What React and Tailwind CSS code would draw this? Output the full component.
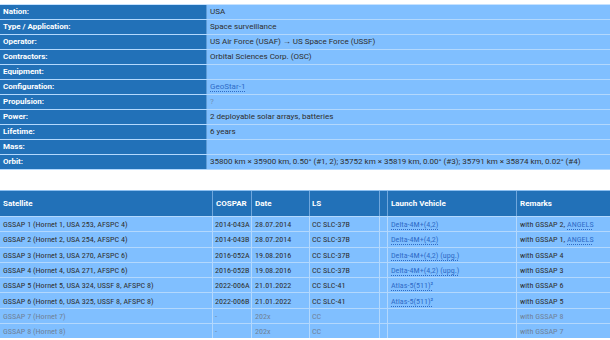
import React from 'react';

const facts = [
  { label: 'Nation:', value: 'USA' },
  { label: 'Type / Application:', value: 'Space surveillance' },
  { label: 'Operator:', value: 'US Air Force (USAF) → US Space Force (USSF)' },
  { label: 'Contractors:', value: 'Orbital Sciences Corp. (OSC)' },
  { label: 'Equipment:', value: '' },
  { label: 'Configuration:', value: 'GeoStar-1', link: true },
  { label: 'Propulsion:', value: '?', muted: true },
  { label: 'Power:', value: '2 deployable solar arrays, batteries' },
  { label: 'Lifetime:', value: '6 years' },
  { label: 'Mass:', value: '' },
  {
    label: 'Orbit:',
    value: '35800 km × 35900 km, 0.50° (#1, 2); 35752 km × 35819 km, 0.00° (#3); 35791 km × 35874 km, 0.02° (#4)',
  },
];

const sats = [
  { name: 'GSSAP 1 (Hornet 1, USA 253, AFSPC 4)', cospar: '2014-043A', date: '28.07.2014', ls: 'CC SLC-37B', lv: 'Delta-4M+(4,2)', with: 'with GSSAP 2,', angels: true },
  { name: 'GSSAP 2 (Hornet 2, USA 254, AFSPC 4)', cospar: '2014-043B', date: '28.07.2014', ls: 'CC SLC-37B', lv: 'Delta-4M+(4,2)', with: 'with GSSAP 1,', angels: true },
  { name: 'GSSAP 3 (Hornet 3, USA 270, AFSPC 6)', cospar: '2016-052A', date: '19.08.2016', ls: 'CC SLC-37B', lv: 'Delta-4M+(4,2) (upg.)', with: 'with GSSAP 4' },
  { name: 'GSSAP 4 (Hornet 4, USA 271, AFSPC 6)', cospar: '2016-052B', date: '19.08.2016', ls: 'CC SLC-37B', lv: 'Delta-4M+(4,2) (upg.)', with: 'with GSSAP 3' },
  { name: 'GSSAP 5 (Hornet 5, USA 324, USSF 8, AFSPC 8)', cospar: '2022-006A', date: '21.01.2022', ls: 'CC SLC-41', lv: 'Atlas-5(511)²', with: 'with GSSAP 6' },
  { name: 'GSSAP 6 (Hornet 6, USA 325, USSF 8, AFSPC 8)', cospar: '2022-006B', date: '21.01.2022', ls: 'CC SLC-41', lv: 'Atlas-5(511)²', with: 'with GSSAP 5' },
  { name: 'GSSAP 7 (Hornet 7)', cospar: '-', date: '202x', ls: 'CC', lv: '', with: 'with GSSAP 8', planned: true },
  { name: 'GSSAP 8 (Hornet 8)', cospar: '-', date: '202x', ls: 'CC', lv: '', with: 'with GSSAP 7', planned: true },
];

const linkCls = 'text-[#2f6cc8] underline decoration-dotted decoration-[#2f6cc8] underline-offset-2';

const FactSheet = () => (
  <div className="mt-[4px] border-t border-[#c6e2ff]">
    {facts.map((f) => (
      <div key={f.label} className="flex h-[15px] border-b border-[#b3d8fd]">
        <div className="w-[207px] shrink-0 bg-[#2271b8] px-[3px] font-bold text-white flex items-center border-r border-[#5d9bd6]">
          {f.label}
        </div>
        <div className="flex-1 bg-[#80bfff] px-[3px] flex items-center text-[#2e2e2e]">
          {f.link ? <span className={linkCls}>{f.value}</span> : f.muted ? <span className="text-[#6f8fb3]">{f.value}</span> : f.value}
        </div>
      </div>
    ))}
  </div>
);

const cols = ['w-[212px]', 'w-[39px]', 'w-[58px]', 'w-[70px]', 'w-[8px]', 'w-[129px]', 'flex-1'];

const SatTable = () => (
  <div className="mt-[20px]">
    <div className="flex h-[26px] bg-[#2271b8] text-white font-bold border-t border-[#8cbff0]">
      <div className={`${cols[0]} px-[3px] flex items-center`}>Satellite</div>
      <div className={`${cols[1]} px-[3px] flex items-center border-l border-[#6fa6dc]`}>COSPAR</div>
      <div className={`${cols[2]} px-[3px] flex items-center border-l border-[#6fa6dc]`}>Date</div>
      <div className={`${cols[3]} px-[2px] flex items-center border-l border-[#6fa6dc]`}>LS</div>
      <div className={`${cols[4]} border-l border-[#6fa6dc]`}></div>
      <div className={`${cols[5]} px-[3px] flex items-center border-l border-[#6fa6dc]`}>Launch Vehicle</div>
      <div className={`${cols[6]} px-[3px] flex items-center border-l border-[#6fa6dc]`}>Remarks</div>
    </div>
    {sats.map((s) => {
      const txt = s.planned ? 'text-[#6f8299]' : 'text-[#2e2e2e]';
      return (
        <div key={s.name} className={`flex h-[15.3px] bg-[#80bfff] border-t border-[#b3d8fd] text-[8.1px] [font-stretch:75%] ${txt}`}>
          <div className={`${cols[0]} px-[3px] flex items-center whitespace-nowrap`}>{s.name}</div>
          <div className={`${cols[1]} px-[2px] flex items-center border-l border-[#b3d8fd] whitespace-nowrap`}>{s.cospar}</div>
          <div className={`${cols[2]} px-[3px] flex items-center border-l border-[#b3d8fd]`}>{s.date}</div>
          <div className={`${cols[3]} px-[2px] flex items-center border-l border-[#b3d8fd] whitespace-nowrap`}>{s.ls}</div>
          <div className={`${cols[4]} border-l border-[#b3d8fd]`}></div>
          <div className={`${cols[5]} px-[3px] flex items-center border-l border-[#b3d8fd] whitespace-nowrap`}>
            {s.lv && <span className={linkCls}>{s.lv}</span>}
          </div>
          <div className={`${cols[6]} px-[3px] flex items-center gap-[2px] border-l border-[#b3d8fd] whitespace-nowrap`}>
            <span>{s.with}</span>
            {s.angels && <span className={linkCls}>ANGELS</span>}
          </div>
        </div>
      );
    })}
  </div>
);

export default function App() {
  return (
    <div className="w-[610px] h-[340px] overflow-hidden bg-white text-[8px] leading-none" style={{ fontFamily: 'Roboto, "Liberation Sans", sans-serif' }}>
      <FactSheet />
      <SatTable />
    </div>
  );
}
